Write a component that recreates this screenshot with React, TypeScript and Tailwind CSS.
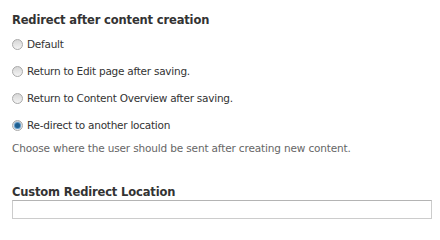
import React from "react";

function Radio({ checked }: { checked?: boolean }) {
  return (
    <span className="relative inline-flex h-[11px] w-[11px] shrink-0 items-center justify-center rounded-full border border-[#a9a9a9] bg-gradient-to-b from-[#d6d6d6] to-[#f4f4f4]">
      {checked && (
        <span className="h-[5px] w-[5px] rounded-full bg-[#1f5f8f] shadow-[0_0_1px_1px_#4d8fc4]" />
      )}
    </span>
  );
}

const options = [
  { label: "Default" },
  { label: "Return to Edit page after saving." },
  { label: "Return to Content Overview after saving." },
  { label: "Re-direct to another location", checked: true },
];

export default function App() {
  return (
    <div className="h-[238px] w-[440px] bg-white px-3 pt-[11px] text-[#333] [font-family:'DejaVu_Sans',Verdana,sans-serif]">
      <div className="text-[11.5px] font-bold leading-[18px] tracking-[-0.15px]">Redirect after content creation</div>
      <div className="mt-[6px] flex flex-col gap-[9px]">
        {options.map((o) => (
          <label key={o.label} className="flex h-[18px] items-center gap-[4px] text-[10.5px] leading-[18px] tracking-[-0.25px]">
            <Radio checked={o.checked} />
            <span>{o.label}</span>
          </label>
        ))}
      </div>
      <div className="mt-[6px] text-[10.5px] leading-[16px] tracking-[-0.15px] text-[#666]">
        Choose where the user should be sent after creating new content.
      </div>
      <div className="mt-[28px] text-[11.5px] font-bold leading-[16px] tracking-[-0.15px]">Custom Redirect Location</div>
      <input
        type="text"
        className="block h-[19px] w-[420px] border border-[#ccc] border-t-[#b4b4b4] bg-white outline-none"
      />
    </div>
  );
}
